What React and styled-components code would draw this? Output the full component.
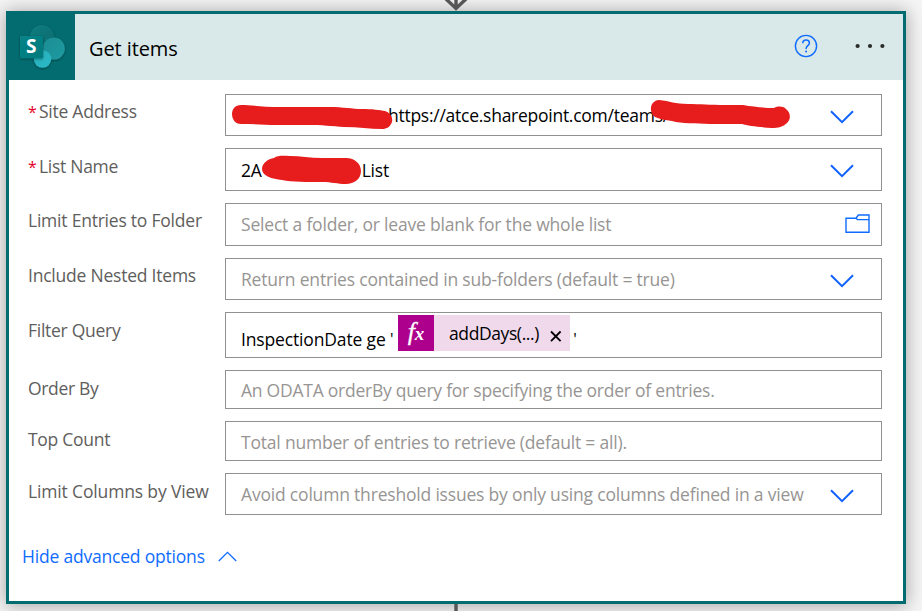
import styled, { createGlobalStyle } from 'styled-components';

const GlobalStyle = createGlobalStyle`
	* {
		box-sizing: border-box;
	}

	body {
		margin: 0;
		overflow: hidden;
		background-color: #f5f5f5;
		font-family: 'Open Sans', 'Noto Sans', sans-serif;
		font-size: 17.5px;
	}
`;

const Page = styled.div`
	display: flex;
	flex-direction: column;
	width: 922px;
	height: 611px;
	overflow: hidden;
`;

const Connector = styled.div`
	position: relative;
	z-index: 2;
	display: flex;
	flex: 0 0 auto;
	justify-content: center;
	width: 912px;
	height: ${({ $height }) => $height}px;

	& svg {
		display: block;
	}
`;

const Card = styled.section`
	position: relative;
	display: flex;
	flex-direction: column;
	width: 900px;
	height: 593px;
	margin-left: 6px;
	border: 3px solid #036c70;
	background-color: #fff;
	box-shadow: 0 1px 17px 1px rgba(0, 0, 0, 0.32);
`;

const Header = styled.header`
	display: flex;
	align-items: center;
	height: 66px;
	flex: 0 0 auto;
	padding-right: 18px;
	background-color: #d9e8e8;
`;

const LogoTile = styled.div`
	width: 66px;
	height: 66px;
	background-color: #036c70;
`;

const Title = styled.h1`
	flex: 1;
	margin: 3px 0 0 14px;
	color: #000;
	font-size: 20px;
	font-weight: 400;
	line-height: 26px;
	letter-spacing: ${({ $track }) => $track}px;
`;

const IconButton = styled.button`
	display: flex;
	margin: 0 0 ${({ $bottom = 0 }) => $bottom}px ${({ $gap = 0 }) => $gap}px;
	padding: 0;
	border: 0;
	background: none;
`;

const Form = styled.div`
	display: flex;
	flex-direction: column;
	gap: 12px;
	padding: 14px 21px 0 19px;
`;

const Row = styled.div`
	display: flex;
	height: ${({ $height }) => $height}px;
`;

const Label = styled.label`
	width: 197px;
	padding-top: ${({ $top }) => $top}px;
	color: #605e5c;
	line-height: 24px;
	white-space: nowrap;
	letter-spacing: ${({ $track }) => $track}px;
`;

const Required = styled.span`
	display: inline-block;
	width: 11px;
	color: #e50026;
	font-size: 16px;
	letter-spacing: 0;
`;

const Field = styled.div`
	position: relative;
	display: flex;
	align-items: center;
	width: 657px;
	padding: 0 11px 0 15px;
	border: 1px solid #919191;
	background-color: #fff;
`;

const FieldText = styled.span`
	flex: 1;
	padding-top: ${({ $drop = 0 }) => $drop}px;
	padding-left: ${({ $left = 0 }) => $left}px;
	padding-bottom: ${({ $lift = 0 }) => $lift}px;
	color: ${({ $filled }) => ($filled ? '#000' : '#979593')};
	line-height: 24px;
	white-space: nowrap;
	letter-spacing: ${({ $track }) => $track}px;
`;

const NameGap = styled.span`
	display: inline-block;
	width: 100px;
`;

const FieldIcon = styled.span`
	display: flex;
	margin-top: ${({ $top = 0 }) => $top}px;
	margin-right: ${({ $right = 0 }) => $right}px;
`;

const Expression = styled.div`
	display: flex;
	align-items: flex-start;
	width: 100%;
	height: 40px;
	line-height: 24px;
	white-space: pre;
`;

const ExpressionText = styled.span`
	width: ${({ $width }) => $width}px;
	padding-top: 12px;
	letter-spacing: ${({ $track }) => $track}px;
`;

const Quote = styled(ExpressionText)`
	font-size: 16px;
	text-align: ${({ $align = 'center' }) => $align};
`;

const Token = styled.span`
	display: flex;
	width: 172px;
	height: 36px;
	background-color: #f1d9ec;
`;

const TokenIcon = styled.span`
	width: 36px;
	height: 36px;
	background-color: #ad008c;
	color: #fff;
	font-family: 'Liberation Serif', serif;
	font-size: 26px;
	font-style: italic;
	line-height: 34px;
	text-align: center;
	-webkit-text-stroke: 0.3px #fff;

	& small {
		font-size: 19px;
		font-weight: 700;
		-webkit-text-stroke: 0;
	}
`;

const TokenText = styled.span`
	width: 116px;
	padding: 6px 0 0 15px;
	letter-spacing: ${({ $track }) => $track}px;
`;

const Redaction = styled.svg`
	position: absolute;
	top: ${({ $top }) => $top}px;
	left: ${({ $left }) => $left}px;
	overflow: visible;
	fill: #e71d1d;
`;

const AdvancedLink = styled.a`
	display: flex;
	align-items: center;
	gap: 13px;
	margin: 29px 0 0 13px;
	color: #0f6cff;
	line-height: 24px;
	letter-spacing: ${({ $track }) => $track}px;
`;

const SharePointLogo = () => (
	<svg width="66" height="66" viewBox="0 0 66 66">
		<defs>
			<linearGradient id="back" x1="0" y1="0" x2="1" y2="1">
				<stop offset="0" stopColor="#0b7f82" />
				<stop offset="0.5" stopColor="#087376" />
				<stop offset="1" stopColor="#05696c" />
			</linearGradient>
			<linearGradient id="middle" x1="0" y1="0" x2="1" y2="1">
				<stop offset="0" stopColor="#1a8e94" />
				<stop offset="1" stopColor="#219aa0" />
			</linearGradient>
			<linearGradient id="front" x1="0" y1="0" x2="1" y2="1">
				<stop offset="0" stopColor="#26afb9" />
				<stop offset="1" stopColor="#2bb9c7" />
			</linearGradient>
			<linearGradient id="tile" x1="0" y1="0" x2="1" y2="1">
				<stop offset="0" stopColor="#078488" />
				<stop offset="1" stopColor="#047a7d" />
			</linearGradient>
			<filter id="logoShadow" x="-30%" y="-30%" width="160%" height="160%">
				<feDropShadow dx="0" dy="0.8" stdDeviation="1.3" floodOpacity="0.45" />
			</filter>
		</defs>
		<g filter="url(#logoShadow)">
			<circle cx="33" cy="23.3" r="12.3" fill="url(#back)" />
			<circle cx="44.8" cy="34.6" r="11" fill="url(#middle)" />
			<circle cx="33.5" cy="45" r="8.7" fill="url(#front)" />
		</g>
		<rect
			x="11"
			y="22"
			width="23"
			height="22.3"
			rx="1"
			fill="url(#tile)"
			filter="url(#logoShadow)"
		/>
		<text
			x="22.3"
			y="39.3"
			fill="#fff"
			fontFamily="'Open Sans', sans-serif"
			fontSize="19"
			fontWeight="700"
			textAnchor="middle"
		>
			S
		</text>
	</svg>
);

const HelpIcon = () => (
	<svg width="24" height="24" viewBox="0 0 24 24">
		<circle cx="12" cy="12" r="10.6" fill="none" stroke="#0f6cff" strokeWidth="1.4" />
		<path
			d="M8.7 9.3C8.8 7.2 10.1 6 12.1 6c2 0 3.3 1.1 3.3 2.9 0 2.7-3.3 2.8-3.3 5.7v.5"
			fill="none"
			stroke="#0f6cff"
			strokeWidth="1.5"
		/>
		<circle cx="12.1" cy="17.5" r="1" fill="#0f6cff" />
	</svg>
);

const MoreIcon = () => (
	<svg width="30" height="6" viewBox="0 0 30 6">
		<circle cx="2.6" cy="3" r="2.1" fill="#2b2b2b" />
		<circle cx="15" cy="3" r="2.1" fill="#2b2b2b" />
		<circle cx="27.4" cy="3" r="2.1" fill="#2b2b2b" />
	</svg>
);

const ChevronDown = () => (
	<svg width="24" height="14" viewBox="0 0 24 14">
		<path d="M1 1.2l11 10.9L23 1.2" fill="none" stroke="#0f62fe" strokeWidth="2" />
	</svg>
);

const ChevronUp = () => (
	<svg width="19" height="11" viewBox="0 0 19 11">
		<path d="M.8 10L9.5 1.3l8.7 8.7" fill="none" stroke="#0f6cff" strokeWidth="1.3" />
	</svg>
);

const FolderIcon = () => (
	<svg width="25" height="20" viewBox="0 0 25 20">
		<path
			d="M1 4.2h10l2.4-3.2h10.6v17.3H1zM11 4.2l1.5 1.4H24"
			fill="none"
			stroke="#0f6cff"
			strokeWidth="1.4"
		/>
	</svg>
);

const CloseIcon = () => (
	<svg width="12" height="36" viewBox="0 0 12 36">
		<path d="M1 16.5l9.6 9.6M10.6 16.5L1 26.1" stroke="#000" strokeWidth="1.8" />
	</svg>
);

const ICONS = {
	chevron: { icon: <ChevronDown />, right: 16, top: 3 },
	folder: { icon: <FolderIcon />, right: 0, top: -1 },
};

const FormRow = ({ label, required, height, top, track, icon, children }) => (
	<Row $height={height}>
		<Label $top={top} $track={track}>
			{required && <Required>*</Required>}
			{label}
		</Label>
		<Field>
			{children}
			{icon && (
				<FieldIcon $right={ICONS[icon].right} $top={ICONS[icon].top}>
					{ICONS[icon].icon}
				</FieldIcon>
			)}
		</Field>
	</Row>
);

const App = () => {
	return (
		<>
			<GlobalStyle />
			<Page>
				<Connector $height={11}>
					<svg width="24" height="11" viewBox="0 0 24 11">
						<path d="M12 0v7M1.5-1.5L12 8.5 22.5-1.5" fill="none" stroke="#555" strokeWidth="3.4" />
					</svg>
				</Connector>
				<Card>
					<Header>
						<LogoTile>
							<SharePointLogo />
						</LogoTile>
						<Title $track={-0.1}>Get items</Title>
						<IconButton aria-label="Help" $bottom={2}>
							<HelpIcon />
						</IconButton>
						<IconButton aria-label="More" $gap={37} $bottom={2}>
							<MoreIcon />
						</IconButton>
					</Header>
					<Form>
						<FormRow label="Site Address" required height={42} top={5} track={-0.25} icon="chevron">
							<FieldText $filled $left={147} $track={-0.26}>
								https://atce.sharepoint.com/teams/
							</FieldText>
							<Redaction $top={9} $left={6} width="161" height="26">
								<path d="M9 1C19 1 32 3 48 3H97C112 3 120 5 130 5 140 5 148 6 153 7 159 9 161 14 160 18 158 23 155 25 150 25 138 25 126 23 112 23 100 22 90 21 75 21H45C32 21 22 20 9 20 3 20 0 15 0 10 0 5 3 1 9 1z" />
							</Redaction>
							<Redaction $top={4} $left={424} width="141" height="30">
								<path d="M9 1C20 2 25 5 38 5 50 5 60 6 75 6H93C105 8 115 9 124 9 128 7 133 7 136 10 141 14 141 20 137 24 133 28 128 29 122 29 110 28 98 27 92 25H60C45 24 32 25 22 22 15 21 9 20 5 18-1 14-1 2 9 1z" />
							</Redaction>
						</FormRow>
						<FormRow label="List Name" required height={43} top={6} track={-0.28} icon="chevron">
							<FieldText $filled $track={-0.2}>
								2A
								<NameGap />
								List
							</FieldText>
							<Redaction $top={6} $left={36} width="100" height="30">
								<path d="M12 3C16 0 22 1 28 1 38 1 48 3 60 3H84C93 3 99 9 99 16 99 24 92 29 84 29 75 29 70 27 60 27 45 27 30 27 20 25 10 24 0 21 0 14 0 8 6 4 12 3z" />
							</Redaction>
						</FormRow>
						<FormRow label="Limit Entries to Folder" height={43} top={5} track={-0.22} icon="folder">
							<FieldText $lift={2} $track={-0.19}>
								Select a folder, or leave blank for the whole list
							</FieldText>
						</FormRow>
						<FormRow label="Include Nested Items" height={42} top={5} track={-0.22} icon="chevron">
							<FieldText $track={-0.19}>
								Return entries contained in sub-folders (default = true)
							</FieldText>
						</FormRow>
						<FormRow label="Filter Query" height={46} top={6} track={-0.27}>
							<Expression>
								<ExpressionText $width={149} $track={-0.15}>
									InspectionDate ge
								</ExpressionText>
								<Quote $width={8} $align="left">'</Quote>
								<Token>
									<TokenIcon>
										f<small>x</small>
									</TokenIcon>
									<TokenText $track={-0.4}>addDays(...)</TokenText>
									<CloseIcon />
								</Token>
								<Quote $width={10}>'</Quote>
							</Expression>
						</FormRow>
						<FormRow label="Order By" height={39} top={6} track={-0.34}>
							<FieldText $track={-0.24}>
								An ODATA orderBy query for specifying the order of entries.
							</FieldText>
						</FormRow>
						<FormRow label="Top Count" height={40} top={6} track={-0.28}>
							<FieldText $drop={2} $track={-0.2}>
								Total number of entries to retrieve (default = all).
							</FieldText>
						</FormRow>
						<FormRow label="Limit Columns by View" height={42} top={6} track={-0.15} icon="chevron">
							<FieldText $track={-0.19}>
								Avoid column threshold issues by only using columns defined in a view
							</FieldText>
						</FormRow>
					</Form>
					<AdvancedLink $track={-0.2}>
						Hide advanced options
						<ChevronUp />
					</AdvancedLink>
				</Card>
				<Connector $height={7}>
					<svg width="4" height="7" viewBox="0 0 4 7">
						<path d="M2 0v7" stroke="#555" strokeWidth="3.4" />
					</svg>
				</Connector>
			</Page>
		</>
	);
};

export default App;
